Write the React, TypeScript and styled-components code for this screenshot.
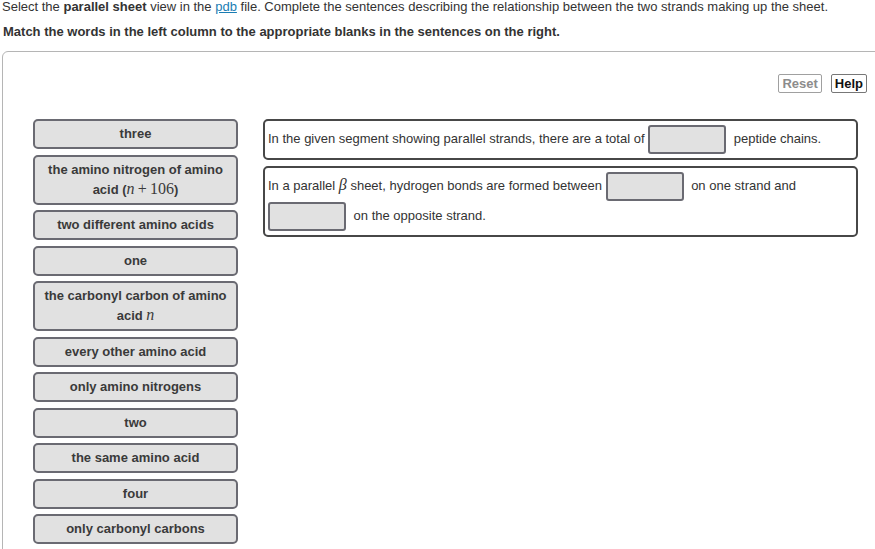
import React from "react";
import styled, { createGlobalStyle } from "styled-components";

const Global = createGlobalStyle`
  html, body {
    margin: 0;
    padding: 0;
    background: #fff;
    overflow: hidden;
  }
  body {
    font-family: "Liberation Sans", Arial, sans-serif;
    color: #333;
  }
`;

const Page = styled.div`
  padding: 0 0 0 2px;
  margin-top: -2px;
`;

const Intro = styled.p`
  margin: 0;
  font-size: 13px;
  line-height: 18px;
  color: #333;
  white-space: nowrap;
`;

const Prompt = styled.p`
  margin: 7px 0 0 1px;
  font-size: 13px;
  line-height: 18px;
  font-weight: bold;
  color: #333;
`;

const Link = styled.a`
  color: #1a7db3;
  text-decoration: underline;
`;

const Panel = styled.section`
  margin-top: 10px;
  width: 885px;
  height: 520px;
  border: 1px solid #b5b5b5;
  border-radius: 6px;
  box-sizing: border-box;
`;

const Toolbar = styled.div`
  display: flex;
  justify-content: flex-end;
  gap: 9px;
  padding: 22px 19px 0 0;
`;

const ToolButton = styled.button<{ $muted?: boolean }>`
  font-family: "Liberation Sans", Arial, sans-serif;
  font-size: 13px;
  font-weight: bold;
  line-height: 17px;
  padding: 0 3px;
  background: #fff;
  border: 1px solid ${(p) => (p.$muted ? "#a0a0a0" : "#777")};
  border-radius: 2px;
  color: ${(p) => (p.$muted ? "#8c8c8c" : "#111")};
`;

const Workspace = styled.div`
  display: flex;
  align-items: flex-start;
  gap: 25px;
  padding: 26px 0 0 30px;
`;

const WordBank = styled.div`
  display: flex;
  flex-direction: column;
  gap: 5.5px;
  width: 205px;
`;

const Chip = styled.div`
  box-sizing: border-box;
  padding: 3px 8px;
  border: 2px solid #6a6a72;
  border-radius: 5px;
  background: #e1e1e1;
  text-align: center;
  font-size: 13px;
  font-weight: bold;
  line-height: 20px;
  color: #3a3a3a;
`;

const Sentences = styled.div`
  display: flex;
  flex-direction: column;
  gap: 6px;
  width: 595px;
`;

const Sentence = styled.div`
  box-sizing: border-box;
  padding: 3px 3px 4px;
  border: 2px solid #474747;
  border-radius: 5px;
  font-size: 13px;
  line-height: 30px;
  color: #333;
`;

const Blank = styled.span`
  display: inline-block;
  box-sizing: border-box;
  width: 78px;
  height: 29px;
  margin-right: 4px;
  vertical-align: middle;
  border: 2px solid #6a6a72;
  border-radius: 3px;
  background: #e1e1e1;
`;

const MathVar = styled.span`
  font-family: "Liberation Serif", "DejaVu Serif", serif;
  font-style: italic;
  font-weight: normal;
  font-size: 16px;
  line-height: 1;
`;

const MathText = styled.span`
  font-family: "Liberation Serif", "DejaVu Serif", serif;
  font-weight: normal;
  font-size: 16px;
  line-height: 1;
`;

const words: React.ReactNode[] = [
  "three",
  <>
    the amino nitrogen of amino acid (<MathVar>n</MathVar>
    <MathText>{"\u2009+\u2009106"}</MathText>)
  </>,
  "two different amino acids",
  "one",
  <>
    the carbonyl carbon of amino acid <MathVar>n</MathVar>
  </>,
  "every other amino acid",
  "only amino nitrogens",
  "two",
  "the same amino acid",
  "four",
  "only carbonyl carbons",
];

export default function App() {
  return (
    <>
      <Global />
      <Page>
        <Intro>
          Select the <b>parallel sheet</b> view in the <Link href="#">pdb</Link> file. Complete the
          sentences describing the relationship between the two strands making up the sheet.
        </Intro>
        <Prompt>Match the words in the left column to the appropriate blanks in the sentences on the right.</Prompt>
        <Panel>
          <Toolbar>
            <ToolButton $muted>Reset</ToolButton>
            <ToolButton>Help</ToolButton>
          </Toolbar>
          <Workspace>
            <WordBank>
              {words.map((w, i) => (
                <Chip key={i}>{w}</Chip>
              ))}
            </WordBank>
            <Sentences>
              <Sentence>
                In the given segment showing parallel strands, there are a total of <Blank /> peptide
                chains.
              </Sentence>
              <Sentence>
                In a parallel <MathVar>β</MathVar> sheet, hydrogen bonds are formed between <Blank /> on one
                strand and <Blank /> on the opposite strand.
              </Sentence>
            </Sentences>
          </Workspace>
        </Panel>
      </Page>
    </>
  );
}
